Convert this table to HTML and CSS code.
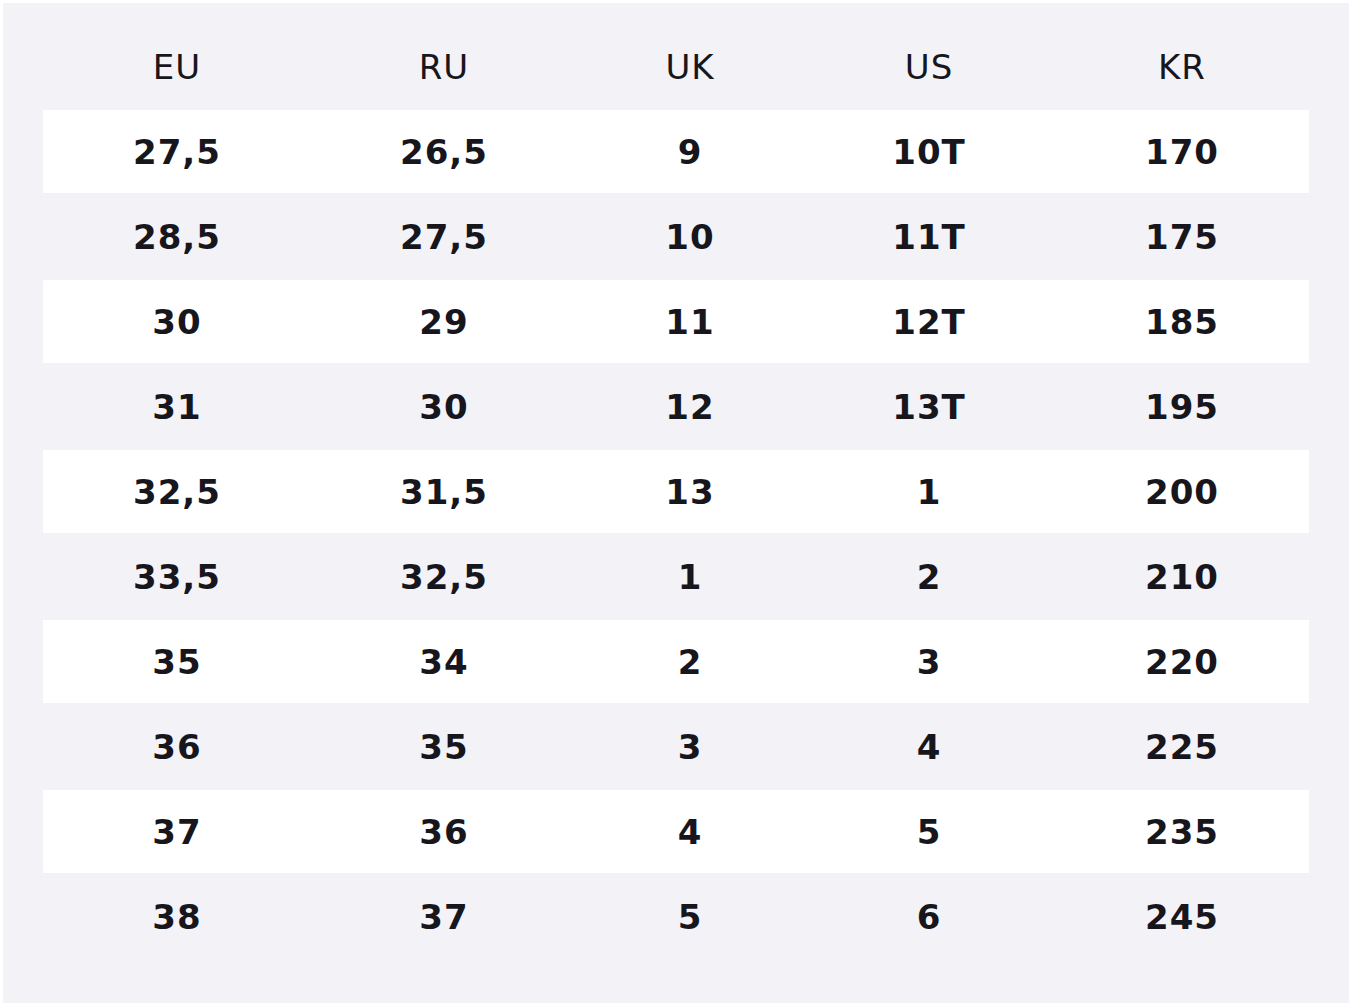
FILE: index.html
```html
<!DOCTYPE html>
<html lang="en">
<head>
<meta charset="utf-8">
<title>Size chart</title>
<link rel="stylesheet" href="styles.css">
</head>
<body>
<div class="chart">
  <div class="row head">
    <div>EU</div><div>RU</div><div>UK</div><div>US</div><div>KR</div>
  </div>
  <div class="row light"><div>27,5</div><div>26,5</div><div>9</div><div>10T</div><div>170</div></div>
  <div class="row"><div>28,5</div><div>27,5</div><div>10</div><div>11T</div><div>175</div></div>
  <div class="row light"><div>30</div><div>29</div><div>11</div><div>12T</div><div>185</div></div>
  <div class="row"><div>31</div><div>30</div><div>12</div><div>13T</div><div>195</div></div>
  <div class="row light"><div>32,5</div><div>31,5</div><div>13</div><div>1</div><div>200</div></div>
  <div class="row"><div>33,5</div><div>32,5</div><div>1</div><div>2</div><div>210</div></div>
  <div class="row light"><div>35</div><div>34</div><div>2</div><div>3</div><div>220</div></div>
  <div class="row"><div>36</div><div>35</div><div>3</div><div>4</div><div>225</div></div>
  <div class="row light"><div>37</div><div>36</div><div>4</div><div>5</div><div>235</div></div>
  <div class="row"><div>38</div><div>37</div><div>5</div><div>6</div><div>245</div></div>
</div>
</body>
</html>
```
FILE: styles.css
```css
html, body {
  background: #ffffff;
}
body {
  margin: 3px;
  font-family: "DejaVu Sans", sans-serif;
  color: #16161c;
}
.chart {
  background: #f3f2f7;
  padding: 40px 40px 44px;
}
.row {
  display: grid;
  grid-template-columns: 268px 266px 226px 252px 254px;
  height: 85px;
  box-sizing: border-box;
  font-size: 34px;
  font-weight: bold;
  letter-spacing: 1px;
  padding-top: 2px;
  text-align: center;
  border-top: 1px solid #f3f2f7;
  border-bottom: 1px solid #f3f2f7;
}
.row > div {
  line-height: 80px;
}
.row.light {
  background: #ffffff;
}
.row.head {
  height: auto;
  border: 0;
  font-weight: normal;
  padding: 4px 0 22px;
}
.row.head > div {
  line-height: 40px;
}
```
